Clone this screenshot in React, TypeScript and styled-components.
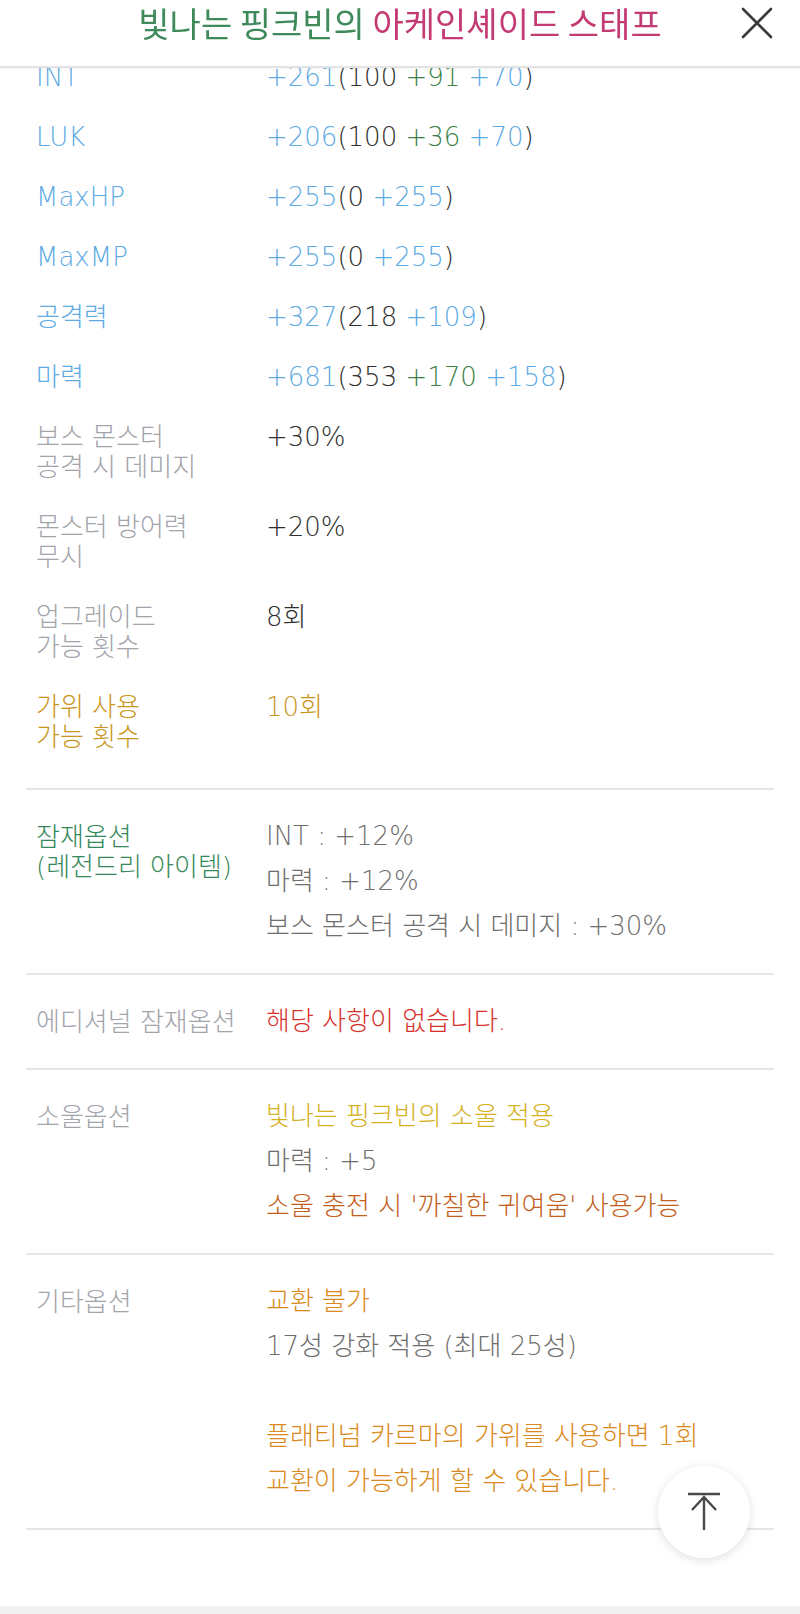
import React from "react";
import styled, { createGlobalStyle } from "styled-components";

const FONT = `"DejaVu Sans", "Noto Sans CJK KR", sans-serif`;
const KFONT = `"Noto Sans CJK KR", sans-serif`;

const GlobalStyle = createGlobalStyle`
  html, body { margin: 0; padding: 0; background: #ffffff; }
  body { font-family: ${FONT}; }
  * { box-sizing: border-box; }
`;

const C = {
  blue: "#5eaae3",
  gray: "#a2a4aa",
  dark: "#2e2e2e",
  green: "#3c8048",
  gold: "#c9961c",
  potGreen: "#35885a",
  valGray: "#6e6e6e",
  red: "#d6322c",
  soulYellow: "#d5b11f",
  soulBrown: "#c35e1c",
  orange: "#d98a20",
  titleGreen: "#3f8a5a",
  titlePink: "#c43a72",
};

const Page = styled.div`
  width: 800px;
  min-height: 1614px;
  background: #fff;
  font-family: ${FONT};
  font-weight: 300;
  color: ${C.dark};
`;

const Header = styled.header`
  position: fixed;
  top: 0;
  left: 0;
  width: 800px;
  height: 68px;
  background: #fff;
  border-bottom: 2px solid #e3e3e3;
  box-shadow: 0 1px 3px rgba(0, 0, 0, 0.05);
  display: flex;
  justify-content: center;
  z-index: 10;
`;

const Title = styled.h1`
  margin: 0;
  font-family: ${KFONT};
  font-size: 34px;
  font-weight: 400;
  line-height: 46px;
  white-space: nowrap;
`;

const Tint = styled.span<{ $c: string }>`
  color: ${(p) => p.$c};
`;

const CloseButton = styled.button`
  position: absolute;
  right: 26px;
  top: 6px;
  width: 34px;
  height: 34px;
  padding: 0;
  border: 0;
  background: none;
  display: flex;
  align-items: center;
  justify-content: center;
`;

const Content = styled.main`
  padding: 62px 26px 0;
`;

const StatList = styled.div`
  display: flex;
  flex-direction: column;
  gap: 30px;
  padding: 0 10px 36px;
`;

const StatRow = styled.div`
  display: grid;
  grid-template-columns: 230px 1fr;
  font-size: 26px;
  line-height: 30px;
`;

const StatLabel = styled.div<{ $c: string }>`
  color: ${(p) => p.$c};
  white-space: nowrap;
`;

const StatValue = styled.div<{ $c?: string }>`
  color: ${(p) => p.$c || C.dark};
  white-space: nowrap;
`;

const Section = styled.section`
  display: grid;
  grid-template-columns: 230px 1fr;
  border-top: 2px solid #e6e6e6;
  padding: 24px 10px;
  font-size: 26px;
`;

const SectionLabel = styled.div<{ $c: string }>`
  color: ${(p) => p.$c};
  line-height: 30px;
  padding-top: 7.5px;
  white-space: nowrap;
`;

const Lines = styled.div`
  display: flex;
  flex-direction: column;
`;

const Line = styled.div<{ $c: string }>`
  color: ${(p) => p.$c};
  line-height: 45px;
  min-height: 45px;
  white-space: nowrap;
`;

const ClosingRule = styled.div`
  border-top: 2px solid #e6e6e6;
  height: 78px;
`;

const Footer = styled.footer`
  background: #f1f1f2;
  height: 40px;
`;

const TopButton = styled.button`
  position: fixed;
  left: 658px;
  top: 1466px;
  width: 92px;
  height: 92px;
  border-radius: 50%;
  border: 0;
  padding: 0;
  background: #fff;
  box-shadow: 0 2px 10px rgba(0, 0, 0, 0.13);
  display: flex;
  align-items: center;
  justify-content: center;
  z-index: 20;
`;

type Seg = [string, string];

const b = (t: string): Seg => [t, C.blue];
const d = (t: string): Seg => [t, C.dark];
const g = (t: string): Seg => [t, C.green];

type Stat = { label: React.ReactNode; labelColor: string; value: Seg[] | string; valueColor?: string };

const stats: Stat[] = [
  { label: "INT", labelColor: C.blue, value: [b("+261"), d("(100 "), g("+91"), d(" "), b("+70"), d(")")] },
  { label: "LUK", labelColor: C.blue, value: [b("+206"), d("(100 "), g("+36"), d(" "), b("+70"), d(")")] },
  { label: "MaxHP", labelColor: C.blue, value: [b("+255"), d("(0 "), b("+255"), d(")")] },
  { label: "MaxMP", labelColor: C.blue, value: [b("+255"), d("(0 "), b("+255"), d(")")] },
  { label: "공격력", labelColor: C.blue, value: [b("+327"), d("(218 "), b("+109"), d(")")] },
  { label: "마력", labelColor: C.blue, value: [b("+681"), d("(353 "), g("+170"), d(" "), b("+158"), d(")")] },
  { label: <>보스 몬스터<br />공격 시 데미지</>, labelColor: C.gray, value: "+30%" },
  { label: <>몬스터 방어력<br />무시</>, labelColor: C.gray, value: "+20%" },
  { label: <>업그레이드<br />가능 횟수</>, labelColor: C.gray, value: "8회" },
  { label: <>가위 사용<br />가능 횟수</>, labelColor: C.gold, value: "10회", valueColor: C.gold },
];

type Block = { label: React.ReactNode; labelColor: string; lines: Seg[] };

const blocks: Block[] = [
  {
    label: <>잠재옵션<br />(레전드리 아이템)</>,
    labelColor: C.potGreen,
    lines: [
      ["INT : +12%", C.valGray],
      ["마력 : +12%", C.valGray],
      ["보스 몬스터 공격 시 데미지 : +30%", C.valGray],
    ],
  },
  {
    label: "에디셔널 잠재옵션",
    labelColor: C.gray,
    lines: [["해당 사항이 없습니다.", C.red]],
  },
  {
    label: "소울옵션",
    labelColor: C.gray,
    lines: [
      ["빛나는 핑크빈의 소울 적용", C.soulYellow],
      ["마력 : +5", C.valGray],
      ["소울 충전 시 '까칠한 귀여움' 사용가능", C.soulBrown],
    ],
  },
  {
    label: "기타옵션",
    labelColor: C.gray,
    lines: [
      ["교환 불가", C.orange],
      ["17성 강화 적용 (최대 25성)", C.valGray],
      ["", C.valGray],
      ["플래티넘 카르마의 가위를 사용하면 1회", C.orange],
      ["교환이 가능하게 할 수 있습니다.", C.orange],
    ],
  },
];

export default function App() {
  return (
    <Page>
      <GlobalStyle />
      <Header>
        <Title>
          <Tint $c={C.titleGreen}>빛나는 핑크빈의 </Tint>
          <Tint $c={C.titlePink}>아케인셰이드 스태프</Tint>
        </Title>
        <CloseButton aria-label="닫기">
          <svg width="32" height="32" viewBox="0 0 32 32">
            <path d="M2 2 L30 30 M30 2 L2 30" stroke="#3a3a3a" strokeWidth="2.6" strokeLinecap="round" fill="none" />
          </svg>
        </CloseButton>
      </Header>
      <Content>
        <StatList>
          {stats.map((s, i) => (
            <StatRow key={i}>
              <StatLabel $c={s.labelColor}>{s.label}</StatLabel>
              <StatValue $c={s.valueColor}>
                {typeof s.value === "string"
                  ? s.value
                  : s.value.map(([t, c], j) => (
                      <Tint key={j} $c={c}>
                        {t}
                      </Tint>
                    ))}
              </StatValue>
            </StatRow>
          ))}
        </StatList>
        {blocks.map((blk, i) => (
          <Section key={i}>
            <SectionLabel $c={blk.labelColor}>{blk.label}</SectionLabel>
            <Lines>
              {blk.lines.map(([t, c], j) => (
                <Line key={j} $c={c}>
                  {t}
                </Line>
              ))}
            </Lines>
          </Section>
        ))}
        <ClosingRule />
      </Content>
      <Footer />
      <TopButton aria-label="맨 위로">
        <svg width="34" height="40" viewBox="0 0 34 40">
          <path d="M1 2 L33 2 M17 5 L17 38 M5 18 L17 5 L29 18" stroke="#4a4a4a" strokeWidth="2.4" fill="none" />
        </svg>
      </TopButton>
    </Page>
  );
}
